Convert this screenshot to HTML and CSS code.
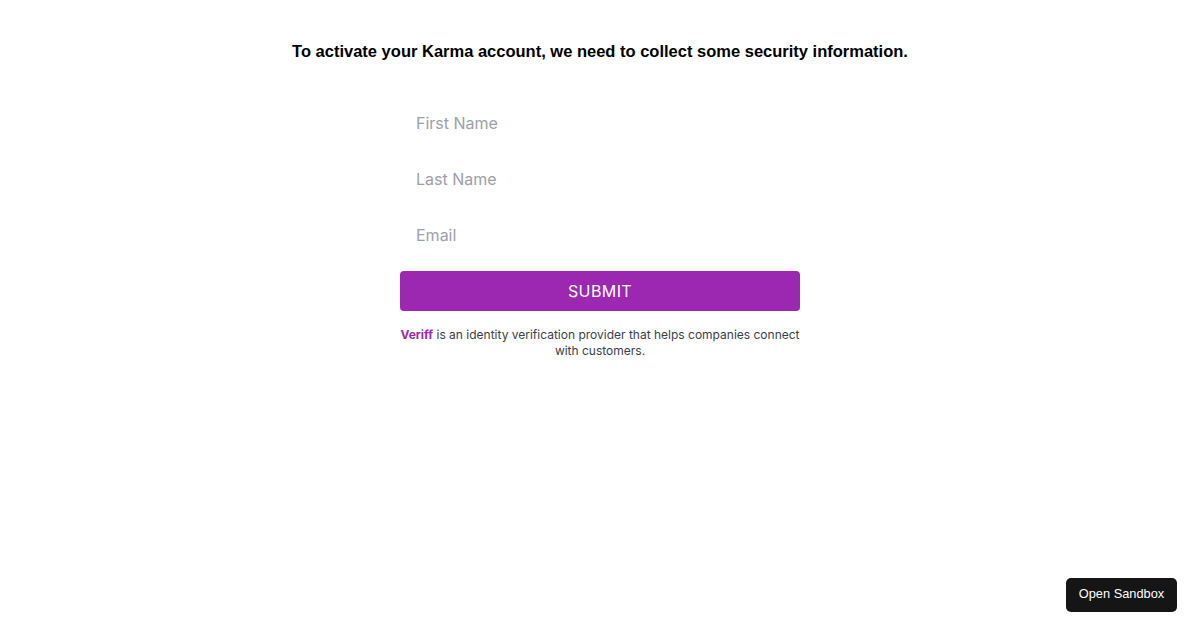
FILE: index.html
```html
<!DOCTYPE html>
<html>
<head>
<meta charset="utf-8">
<link rel="stylesheet" href="styles.css">
</head>
<body>
<main class="page">
  <h1 class="title">To activate your Karma account, we need to collect some security information.</h1>
  <form class="form">
    <input class="field" type="text" placeholder="First Name">
    <input class="field" type="text" placeholder="Last Name">
    <input class="field" type="email" placeholder="Email">
    <button class="submit" type="button">SUBMIT</button>
    <p class="note"><span class="brand">Veriff</span> is an identity verification provider that helps companies connect with customers.</p>
  </form>
</main>
<button class="sandbox" type="button">Open Sandbox</button>
</body>
</html>
```
FILE: styles.css
```css
html, body {
  margin: 0;
  padding: 0;
  background: #fff;
}
body {
  width: 1200px;
  height: 630px;
  overflow: hidden;
  position: relative;
  font-family: Inter, "Liberation Sans", sans-serif;
}
.page {
  display: flex;
  flex-direction: column;
  align-items: center;
  padding-top: 40px;
}
.title {
  margin: 0;
  font-family: "Liberation Sans", Arial, sans-serif;
  font-weight: 700;
  font-size: 16.5px;
  line-height: 22px;
  color: #000;
}
.form {
  width: 400px;
  display: flex;
  flex-direction: column;
  margin-top: 33px;
}
.field {
  height: 56px;
  box-sizing: border-box;
  border: none;
  outline: none;
  padding: 0 16px;
  font-family: Inter, sans-serif;
  font-size: 16px;
  color: #222;
  background: transparent;
}
.field::placeholder {
  color: #9ca0a8;
}
.submit {
  margin-top: 8px;
  height: 40px;
  border: none;
  border-radius: 4px;
  background: #9c27b0;
  color: #fff;
  font-family: Inter, sans-serif;
  font-size: 16px;
  letter-spacing: 0.4px;
  cursor: pointer;
}
.note {
  margin: 16px 0 0;
  text-align: center;
  font-family: Inter, sans-serif;
  font-size: 12px;
  line-height: 16px;
  color: #3a3e4a;
}
.brand {
  color: #9c27b0;
  font-weight: 700;
}
.sandbox {
  position: absolute;
  right: 23px;
  bottom: 18px;
  width: 111px;
  height: 34px;
  border: none;
  border-radius: 5px;
  background: #151515;
  color: #fff;
  font-family: "Liberation Sans", Arial, sans-serif;
  font-size: 12.8px;
  padding: 0 0 3px;
}
```
